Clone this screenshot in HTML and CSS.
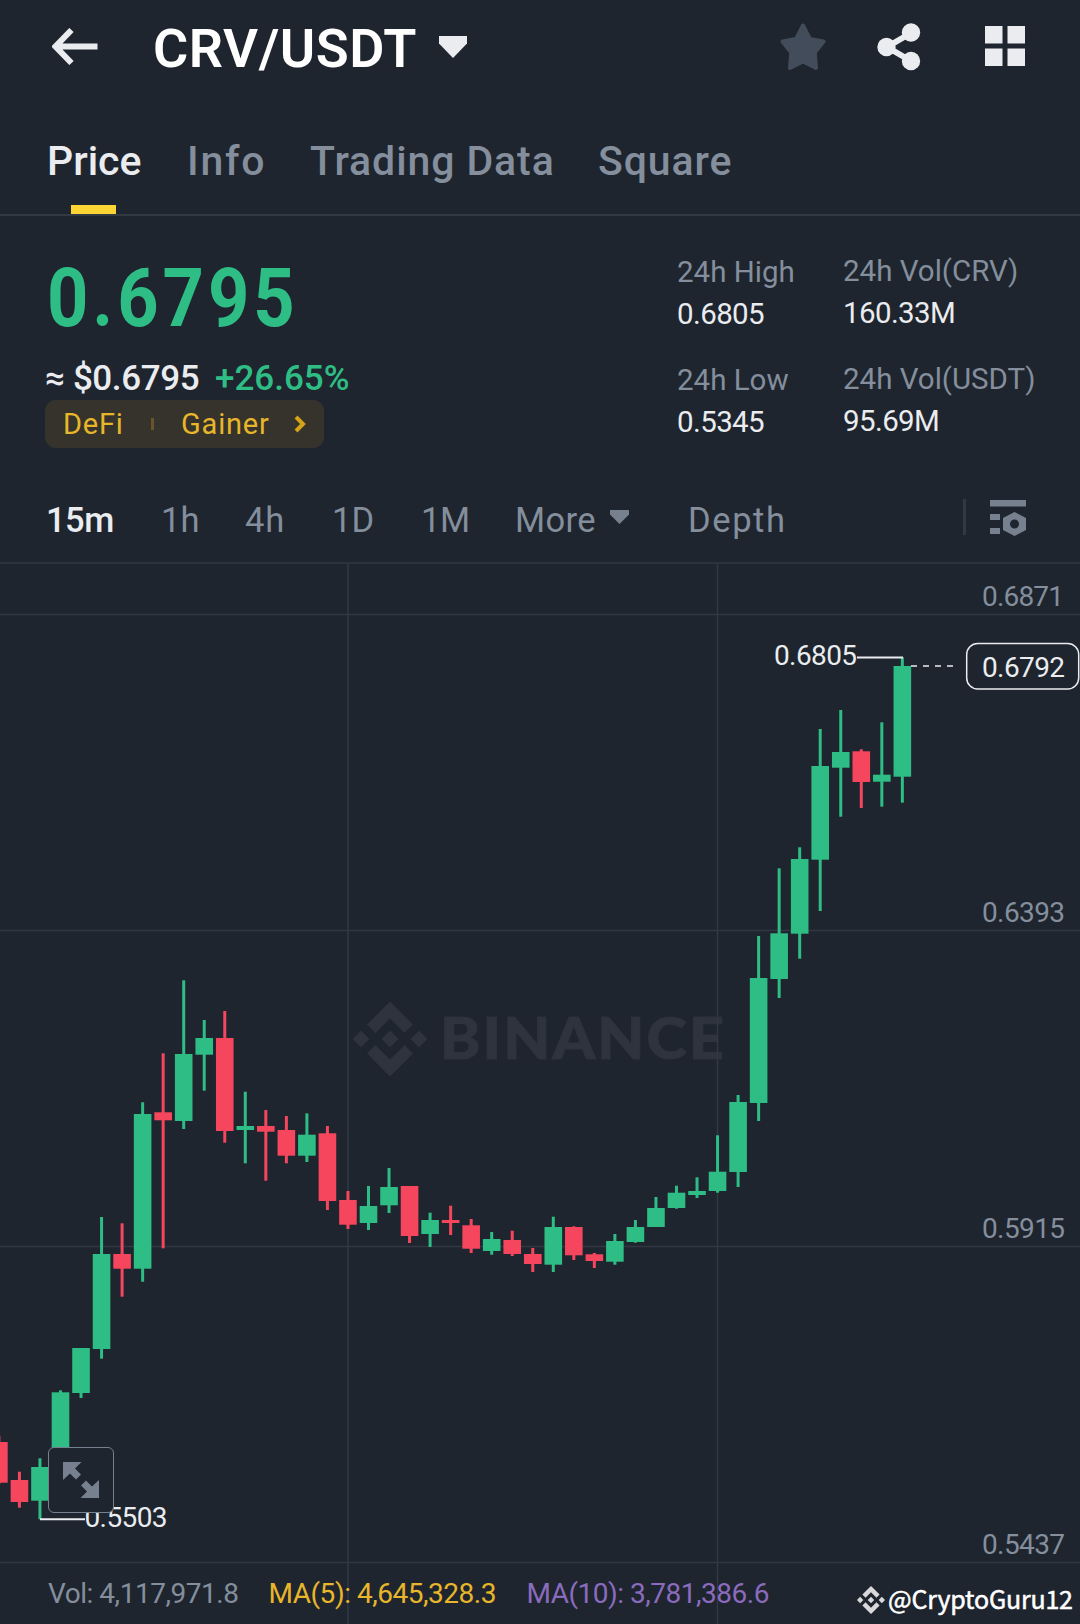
FILE: index.html
```html
<!DOCTYPE html>
<html lang="en">
<head>
    <meta charset="UTF-8">
    <meta name="viewport" content="width=device-width, initial-scale=1.0">
    <title>CRV/USDT</title>
    <link rel="stylesheet" href="styles.css">
</head>
<body>

    <header class="header">
        <svg class="back" width="46" height="37" viewBox="0 0 46 37">
            <path d="M19.5 2 3.5 18.5l16 16.500M4 18.500h41.500" fill="none" stroke="#eaecef" stroke-width="6"/>
        </svg>
        <h1 class="pair">CRV/USDT</h1>
        <svg class="pair-caret" width="28" height="22" viewBox="0 0 28 22">
            <path d="M0 0h28v7.500L14 22 0 7.500z" fill="#eaecef"/>
        </svg>
        <svg class="star" width="46" height="48" viewBox="0 0 46 48">
            <path d="M23 2.500 29.800 16 43.500 18.500 34.800 29.500 36 45 23 38.500 10 45 11.200 29.500 2.500 18.500 16.200 16z" fill="#434c5a" stroke="#434c5a" stroke-width="4" stroke-linejoin="round"/>
        </svg>
        <svg class="share" width="44" height="48" viewBox="0 0 44 48">
            <path d="M34 10 10 24l24 14" fill="none" stroke="#eaecef" stroke-width="6"/>
            <circle cx="9.500" cy="24" r="9.200" fill="#eaecef"/>
            <circle cx="34" cy="9.500" r="9.200" fill="#eaecef"/>
            <circle cx="34" cy="38" r="9.200" fill="#eaecef"/>
        </svg>
        <svg class="grid-icon" width="40" height="40" viewBox="0 0 40 40">
            <path d="M0 0h17.500v17.500H0zM22.500 0H40v17.500H22.500zM0 22.500h17.500V40H0zM22.500 22.500H40V40H22.500z" fill="#eaecef"/>
        </svg>
    </header>

    <nav class="tabs">
        <a class="tab tab-price active">Price</a>
        <a class="tab tab-info">Info</a>
        <a class="tab tab-data">Trading Data</a>
        <a class="tab">Square</a>
    </nav>

    <section class="quote">
        <div class="quote-main">
            <div class="price">0.6795</div>
            <div class="fiat">
                <span class="fiat-value">≈ $0.6795</span>
                <span class="change">+26.65%</span>
            </div>
            <div class="tags">
                <span class="tag-defi">DeFi</span>
                <i class="tag-sep"></i>
                <span class="tag-gainer">Gainer</span>
                <svg class="tag-arrow" width="12" height="18" viewBox="0 0 12 18">
                    <path d="M2 2l7 7-7 7" fill="none" stroke="#d6a216" stroke-width="4"/>
                </svg>
            </div>
        </div>
        <div class="stats stats-price">
            <div class="label">24h High</div>
            <div class="value">0.6805</div>
            <div class="label">24h Low</div>
            <div class="value">0.5345</div>
        </div>
        <div class="stats stats-vol">
            <div class="label">24h Vol(CRV)</div>
            <div class="value">160.33M</div>
            <div class="label">24h Vol(USDT)</div>
            <div class="value">95.69M</div>
        </div>
    </section>

    <nav class="intervals">
        <a class="i-15m active">15m</a>
        <a class="i-1h">1h</a>
        <a class="i-4h">4h</a>
        <a class="i-1d">1D</a>
        <a class="i-1mo">1M</a>
        <a class="i-more">More</a>
        <svg class="more-caret" width="19" height="14" viewBox="0 0 19 14">
            <path d="M0 0h19v4.500L9.500 14 0 4.500z" fill="#76808f"/>
        </svg>
        <a class="i-depth">Depth</a>
        <i class="intervals-sep"></i>
        <svg class="settings" width="36" height="36" viewBox="0 0 36 36">
            <path d="M0 0h36v6.500H0zM0 14h10v6H0zM0 28h10v6H0z" fill="#76808f"/>
            <path fill-rule="evenodd" d="M24.500 12 36 18v12l-11.500 6L13 30V18zM24.500 19.500a4.500 4.500 0 1 0 0 9 4.500 4.500 0 0 0 0-9z" fill="#76808f"/>
        </svg>
    </nav>

    <div class="chart">
        <svg class="plot" width="1080" height="1060" viewBox="0 564 1080 1060">
            <defs>
                <symbol id="logo" viewBox="0 0 126.600 126.600">
                    <path d="M38.700 53.200l24.600-24.600 24.600 24.600 14.300-14.300L63.300 0 24.400 38.900zM0 63.300l14.300-14.300 14.300 14.300-14.300 14.300zM38.700 73.400l24.600 24.600 24.600-24.600 14.300 14.300-38.900 38.900-38.900-38.900zM98 63.300l14.300-14.300 14.300 14.300-14.300 14.300zM77.800 63.300 63.300 48.800 48.800 63.300l14.500 14.500z"/>
                </symbol>
            </defs>

            <use class="watermark" href="#logo" x="352.500" y="1001.500" width="75" height="75"/>
            <text class="watermark watermark-text" x="440" y="1059.300" textLength="286" lengthAdjust="spacingAndGlyphs">BINANCE</text>

            <g class="gridlines">
                <path d="M0 614.500h1080M0 930.500h1080M0 1246.500h1080M0 1562.500h1080"/>
                <path d="M348 564v1060M717.500 564v1060"/>
            </g>

            <g id="candles"></g>

            <g class="axis">
                <text x="982" y="606" textLength="82">0.6871</text>
                <text x="982" y="922" textLength="83">0.6393</text>
                <text x="982" y="1238" textLength="83">0.5915</text>
                <text x="982" y="1554" textLength="83">0.5437</text>
            </g>

            <path class="marker" d="M857 657.500h46M40 1519.300h45"/>
            <text class="bright" x="774" y="665" textLength="83">0.6805</text>
            <text class="bright" x="84.500" y="1526.500" textLength="83">0.5503</text>

            <path class="last-line" d="M911 666h43"/>
            <rect class="last-box" x="966.700" y="643.500" width="112" height="45.500" rx="11"/>
            <text class="bright" x="982" y="676.700" textLength="83">0.6792</text>

            <text class="vol" x="48" y="1602.700" textLength="191">Vol: 4,117,971.8</text>
            <text class="ma5" x="268.500" y="1602.700" textLength="228">MA(5): 4,645,328.3</text>
            <text class="ma10" x="526.500" y="1602.700" textLength="243">MA(10): 3,781,386.6</text>

            <use class="handle-logo" href="#logo" x="857" y="1586" width="28" height="28"/>
            <text class="handle" x="888" y="1609" textLength="185">@CryptoGuru12</text>
        </svg>

        <button class="expand">
            <svg width="36" height="36" viewBox="0 0 36 36">
                <path d="M0 0h18.500l-6.500 6.500 6 6-5 5-6-6L0 18zM36 36H17.500l6.500-6.500-6-6 5-5 6 6L36 18z" fill="#76808f"/>
            </svg>
        </button>
    </div>

    <script>
        // direction, wick top, body top, body bottom, wick bottom
        const candles = [
            ['down', 1435.7, 1442, 1482.7, 1484],
            ['down', 1471.7, 1480, 1502, 1507.7],
            ['up', 1458.3, 1467, 1500.7, 1519.3],
            ['up', 1390.3, 1392.3, 1467, 1467],
            ['up', 1348, 1348, 1393, 1398],
            ['up', 1217, 1254, 1349, 1358.7],
            ['down', 1223.3, 1254, 1268.7, 1296.7],
            ['up', 1102.3, 1114, 1268.7, 1281.7],
            ['down', 1053.3, 1112.3, 1120.3, 1248.3],
            ['up', 980.3, 1054, 1121, 1129],
            ['up', 1020, 1038, 1054.7, 1090.7],
            ['down', 1011, 1038, 1131, 1142.7],
            ['up', 1091.7, 1126, 1130, 1163.3],
            ['down', 1110, 1126, 1131.7, 1180.7],
            ['down', 1116, 1130, 1155.7, 1163.3],
            ['up', 1113.3, 1134.7, 1155.7, 1162],
            ['down', 1126, 1133.3, 1201, 1210],
            ['down', 1191, 1200, 1224.7, 1229],
            ['up', 1186, 1206, 1223, 1230],
            ['up', 1168, 1187, 1205.3, 1213],
            ['down', 1186, 1186, 1236, 1243],
            ['up', 1212.7, 1220, 1234, 1247],
            ['down', 1205.7, 1220, 1223, 1235],
            ['down', 1219, 1225.3, 1248.7, 1253],
            ['up', 1232, 1239, 1251, 1254.7],
            ['down', 1230.7, 1240, 1254, 1256],
            ['down', 1248, 1254, 1264, 1272],
            ['up', 1216.7, 1227, 1264.7, 1272],
            ['down', 1226.3, 1227, 1255.3, 1260],
            ['down', 1253, 1254.3, 1261, 1268],
            ['up', 1234, 1241, 1261.7, 1264.7],
            ['up', 1220, 1227, 1242, 1242.7],
            ['up', 1197, 1208, 1227, 1227],
            ['up', 1185.7, 1192.7, 1208, 1208.7],
            ['up', 1177.3, 1191, 1195, 1198],
            ['up', 1135.3, 1171.7, 1191, 1192.7],
            ['up', 1095, 1102, 1172, 1187],
            ['up', 936, 978, 1103, 1121],
            ['up', 868.3, 933.3, 979, 998],
            ['up', 847.3, 859, 933.7, 958.7],
            ['up', 729, 766, 859.7, 911],
            ['up', 710, 752, 767.7, 816.7],
            ['down', 749.3, 751.3, 782, 808],
            ['up', 722.3, 774.7, 781.7, 806.7],
            ['up', 657.3, 666, 776.7, 802.7]
        ];

        const step = 20.533;
        const bodyWidth = 17.6;
        const wickWidth = 3;
        const group = document.getElementById('candles');

        function addRect(x, y, width, height, className) {
            const rect = document.createElementNS('http://www.w3.org/2000/svg', 'rect');
            rect.setAttribute('x', x);
            rect.setAttribute('y', y);
            rect.setAttribute('width', width);
            rect.setAttribute('height', height);
            rect.setAttribute('class', className);
            group.appendChild(rect);
        }

        candles.forEach(([direction, high, top, bottom, low], i) => {
            const center = -1.1 + i * step;
            addRect(center - wickWidth / 2, high, wickWidth, low - high, direction);
            addRect(center - bodyWidth / 2, top, bodyWidth, bottom - top, direction);
        });
    </script>

</body>
</html>
```
FILE: styles.css
```css
body {
    margin: 0;
    width: 1080px;
    background-color: #1e252e;
    color: #eaecef;
    font-family: Roboto, "Liberation Sans", sans-serif;
    white-space: nowrap;
    overflow: hidden;
}
svg {
    display: block;
    flex: none;
}

/* header */
.header {
    display: flex;
    align-items: center;
    height: 97px;
    box-sizing: border-box;
    padding: 0 55px 0 52px;
}
.back {
    margin-bottom: 5px;
}
.pair {
    width: 282px;
    margin: 0 0 0 55px;
    font-size: 54px;
    font-weight: 600;
    line-height: 97px;
    letter-spacing: 0.5px;
    color: #ffffff;
}
.pair-caret {
    margin-left: 4px;
    margin-bottom: 4px;
}
.star {
    margin-left: auto;
    margin-bottom: 4px;
}
.share {
    margin-left: 51px;
    margin-bottom: 4px;
}
.grid-icon {
    margin-left: 64px;
    margin-bottom: 5px;
}

/* tabs */
.tabs {
    display: flex;
    height: 119px;
    box-sizing: border-box;
    padding: 34px 0 0 47px;
    border-bottom: 2px solid #323943;
    font-size: 41px;
    font-weight: 500;
    line-height: 60px;
    color: #848e9c;
}
.tab {
    letter-spacing: 0.9px;
}
.tab-price {
    width: 140px;
    letter-spacing: 0;
}
.tab-info {
    width: 123px;
    letter-spacing: 1.8px;
}
.tab-data {
    width: 288px;
}
.tab.active {
    position: relative;
    color: #eaecef;
}
.tab.active::after {
    content: "";
    position: absolute;
    left: 24px;
    bottom: 0;
    width: 45px;
    height: 9px;
    background-color: #fcd535;
}

/* quote */
.quote {
    display: flex;
    height: 263px;
}
.quote-main {
    width: 633px;
    box-sizing: border-box;
    padding: 40px 0 0 45px;
}
.price {
    margin-left: 2px;
    font-size: 82px;
    font-weight: 700;
    line-height: 84px;
    letter-spacing: 4.5px;
    color: #2ebd85;
    transform: scaleX(0.88);
    transform-origin: left;
}
.fiat {
    display: flex;
    margin-top: 16px;
    font-size: 35px;
    font-weight: 500;
    line-height: 45px;
    height: 44px;
}
.fiat-value {
    width: 170px;
    letter-spacing: -0.4px;
}
.change {
    color: #2ebd85;
}
.tags {
    display: flex;
    align-items: center;
    width: 279px;
    height: 48px;
    box-sizing: border-box;
    padding-left: 18px;
    border-radius: 11px;
    background-color: #35332b;
    font-size: 29px;
    line-height: 50px;
    letter-spacing: 0.8px;
    color: #e8b62a;
}
.tag-defi {
    width: 88px;
}
.tag-sep {
    width: 3px;
    height: 12px;
    background-color: #6b5426;
}
.tag-gainer {
    width: 113px;
    margin-left: 27px;
}
.stats {
    padding-top: 35px;
    font-size: 29.5px;
    line-height: 42px;
}
.stats-price {
    width: 166px;
    padding-left: 44px;
}
.stats-vol {
    padding-top: 34px;
}
.label {
    color: #848e9c;
}
.value {
    letter-spacing: -0.6px;
}
.value + .label {
    margin-top: 24px;
}

/* intervals */
.intervals {
    display: flex;
    align-items: center;
    height: 85px;
    box-sizing: border-box;
    padding-left: 46px;
    border-bottom: 2px solid #2b323d;
    font-size: 34.5px;
    line-height: 85px;
    color: #848e9c;
}
.intervals .active {
    font-weight: 500;
    letter-spacing: -0.5px;
    color: #eaecef;
}
.i-15m {
    width: 115px;
}
.i-1h {
    width: 84px;
}
.i-4h {
    width: 87px;
    letter-spacing: 0.8px;
}
.i-1d {
    width: 89px;
}
.i-1mo {
    width: 94px;
    letter-spacing: -0.5px;
}
.i-more {
    width: 95px;
    letter-spacing: 0.4px;
}
.more-caret {
    margin-bottom: 8px;
}
.i-depth {
    width: 275px;
    margin-left: 59px;
    letter-spacing: 1.6px;
}
.intervals-sep {
    width: 3px;
    height: 36px;
    margin-bottom: 7px;
    background-color: #323943;
}
.settings {
    margin-left: 24px;
    margin-bottom: 6px;
}

/* chart */
.chart {
    position: relative;
    height: 1060px;
    font-size: 28px;
}
.watermark {
    fill: #2e333e;
}
.watermark-text {
    font-family: Lato, sans-serif;
    font-size: 57px;
    font-weight: 900;
    letter-spacing: 2px;
    stroke: #2e333e;
    stroke-width: 1;
}
.gridlines {
    fill: none;
    stroke: #313843;
    stroke-width: 1.5;
}
.up {
    fill: #2ebd85;
}
.down {
    fill: #f6465d;
}
.axis,
.vol {
    fill: #848e9c;
}
.bright {
    fill: #eaecef;
}
.marker {
    fill: none;
    stroke: #eaecef;
    stroke-width: 2;
}
.last-line {
    stroke: #eaecef;
    stroke-width: 1.5;
    stroke-dasharray: 6 6;
}
.last-box {
    fill: #1e252e;
    stroke: #eaecef;
    stroke-width: 1.5;
}
.ma5 {
    fill: #e8b62a;
}
.ma10 {
    fill: #8a6bbd;
}
.handle-logo {
    fill: #d9d9d9;
}
.handle {
    fill: #ffffff;
    stroke: #ffffff;
    stroke-width: 0.5;
    font-family: "Noto Sans CJK SC", sans-serif;
    font-size: 25px;
    font-weight: 400;
}
.expand {
    position: absolute;
    left: 48px;
    top: 883px;
    display: flex;
    align-items: center;
    justify-content: center;
    width: 66px;
    height: 66px;
    padding: 0;
    border: 1.5px solid #76808f;
    border-radius: 6px;
    background-color: #1e252e;
}
```
